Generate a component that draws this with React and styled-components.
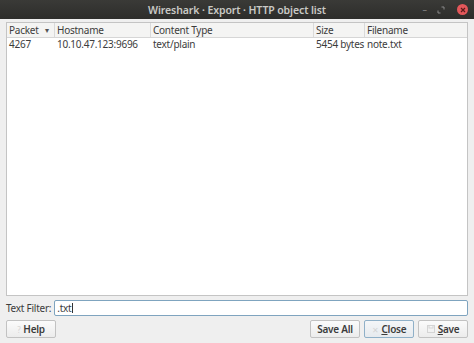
import React from "react";
import styled, { createGlobalStyle } from "styled-components";

const GlobalStyle = createGlobalStyle`
  html, body {
    margin: 0;
    padding: 0;
    background: #efefef;
  }
  body {
    font-family: "Noto Sans", "Open Sans", sans-serif;
    font-size: 10px;
    color: #3c3c3c;
  }
`;

const columns = [
  { key: "packet", label: "Packet", width: 48, sort: true },
  { key: "host", label: "Hostname", width: 96 },
  { key: "type", label: "Content Type", width: 163 },
  { key: "size", label: "Size", width: 51 },
  { key: "file", label: "Filename", width: 104 },
];

const rows = [
  { packet: "4267", host: "10.10.47.123:9696", type: "text/plain", size: "5454 bytes", file: "note.txt" },
];

const App = () => {
  return (
    <>
      <GlobalStyle />
      <Window>
        <TitleBar>
          <Title>Wireshark · Export · HTTP object list</Title>
          <WinControls>
            <Minimize>–</Minimize>
            <Restore>
              <svg width="8" height="8" viewBox="0 0 8 8">
                <path d="M4.5 1 L7 1 L7 3.5 M3.5 7 L1 7 L1 4.5" fill="none" stroke="#8a8a8a" strokeWidth="1" />
              </svg>
            </Restore>
            <CloseDot>
              <svg width="6" height="6" viewBox="0 0 6 6">
                <path d="M1 1 L5 5 M5 1 L1 5" stroke="#5a1a1a" strokeWidth="1.2" />
              </svg>
            </CloseDot>
          </WinControls>
        </TitleBar>
        <Body>
          <Table>
            <HeaderRow>
              {columns.map((c) => (
                <HeaderCell key={c.key} style={{ width: c.width }}>
                  {c.label}
                  {c.sort && <SortArrow>▾</SortArrow>}
                </HeaderCell>
              ))}
            </HeaderRow>
            {rows.map((r) => (
              <Row key={r.packet}>
                {columns.map((c) => (
                  <Cell key={c.key} style={{ width: c.width }}>
                    {r[c.key]}
                  </Cell>
                ))}
              </Row>
            ))}
          </Table>
          <FilterRow>
            <FilterLabel>Text Filter:</FilterLabel>
            <FilterInput>
              .txt<Caret />
            </FilterInput>
          </FilterRow>
          <ButtonRow>
            <Button>
              <Icon>?</Icon>
              <span>Help</span>
            </Button>
            <Spacer />
            <Button>
              <span>Save All</span>
            </Button>
            <Button $default>
              <Icon>✕</Icon>
              <span>
                <u>C</u>lose
              </span>
            </Button>
            <Button>
              <svg width="8" height="8" viewBox="0 0 8 8">
                <rect x="0.5" y="0.5" width="7" height="7" fill="none" stroke="#d4d4d4" />
                <rect x="2" y="0.5" width="4" height="2.5" fill="none" stroke="#d4d4d4" />
              </svg>
              <span>
                <u>S</u>ave
              </span>
            </Button>
          </ButtonRow>
        </Body>
      </Window>
    </>
  );
};

export default App;

const Window = styled.div`
  width: 474px;
  height: 343px;
  display: flex;
  flex-direction: column;
  background: #efefef;
  overflow: hidden;
`;

const TitleBar = styled.div`
  height: 19px;
  flex: none;
  background: linear-gradient(#3a3a37, #2d2d2b);
  position: relative;
  display: flex;
  align-items: center;
  justify-content: center;
`;

const Title = styled.div`
  color: #c9c9c5;
  font-weight: 600;
  font-size: 10.5px;
  letter-spacing: -0.1px;
`;

const WinControls = styled.div`
  position: absolute;
  right: 6px;
  top: 0;
  height: 19px;
  display: flex;
  align-items: center;
  gap: 10px;
`;

const Minimize = styled.span`
  color: #8a8a8a;
  font-size: 9px;
  line-height: 1;
`;

const Restore = styled.span`
  display: flex;
  margin-right: 2px;
`;

const CloseDot = styled.span`
  width: 11px;
  height: 11px;
  border-radius: 50%;
  background: #e3575a;
  display: flex;
  align-items: center;
  justify-content: center;
`;

const Body = styled.div`
  flex: 1;
  display: flex;
  flex-direction: column;
  padding: 3px 6px 5px 6px;
  gap: 4px;
`;

const Table = styled.div`
  flex: 1;
  background: #ffffff;
  border: 1px solid #c4c4c4;
  display: flex;
  flex-direction: column;
`;

const HeaderRow = styled.div`
  display: flex;
  height: 14px;
  background: #f4f4f3;
  border-bottom: 1px solid #d6d6d6;
`;

const HeaderCell = styled.div`
  position: relative;
  flex: none;
  box-sizing: border-box;
  padding-left: 2px;
  line-height: 14px;
  border-right: 1px solid #dadada;
  color: #3c3c3c;
  letter-spacing: -0.25px;
  white-space: nowrap;
  &:last-child {
    border-right: none;
    flex: 1;
  }
`;

const SortArrow = styled.span`
  position: absolute;
  right: 5px;
  top: 0;
  font-size: 8px;
  color: #555;
`;

const Row = styled.div`
  display: flex;
  height: 13px;
`;

const Cell = styled.div`
  flex: none;
  box-sizing: border-box;
  padding-left: 2px;
  line-height: 13px;
  color: #3c3c3c;
  letter-spacing: -0.25px;
  white-space: nowrap;
  &:last-child {
    flex: 1;
  }
`;

const FilterRow = styled.div`
  display: flex;
  align-items: center;
  gap: 3px;
  height: 16px;
`;

const FilterLabel = styled.span`
  letter-spacing: -0.25px;
  white-space: nowrap;
`;

const FilterInput = styled.div`
  flex: 1;
  height: 16px;
  box-sizing: border-box;
  background: #ffffff;
  border: 1px solid #7fa4bf;
  border-radius: 2px;
  padding-left: 2px;
  display: flex;
  align-items: center;
  letter-spacing: -0.25px;
`;

const Caret = styled.span`
  display: inline-block;
  width: 1px;
  height: 10px;
  background: #333;
  margin-left: 1px;
`;

const ButtonRow = styled.div`
  display: flex;
  gap: 4px;
  height: 18px;
`;

const Spacer = styled.div`
  flex: 1;
`;

const Button = styled.div`
  width: 50px;
  box-sizing: border-box;
  height: 18px;
  display: flex;
  align-items: center;
  justify-content: center;
  gap: 3px;
  border: 1px solid ${(p) => (p.$default ? "#8fb0c8" : "#c2c2c2")};
  border-radius: 2px;
  background: ${(p) =>
    p.$default ? "linear-gradient(#f4f6f8, #e6eaee)" : "linear-gradient(#fbfbfb, #ececec)"};
  font-weight: 600;
  color: #3c3c3c;
  letter-spacing: -0.25px;
  u {
    text-decoration: underline;
    text-underline-offset: 1px;
  }
`;

const Icon = styled.span`
  color: #d4d4d4;
  font-weight: 400;
  font-size: 8px;
`;
